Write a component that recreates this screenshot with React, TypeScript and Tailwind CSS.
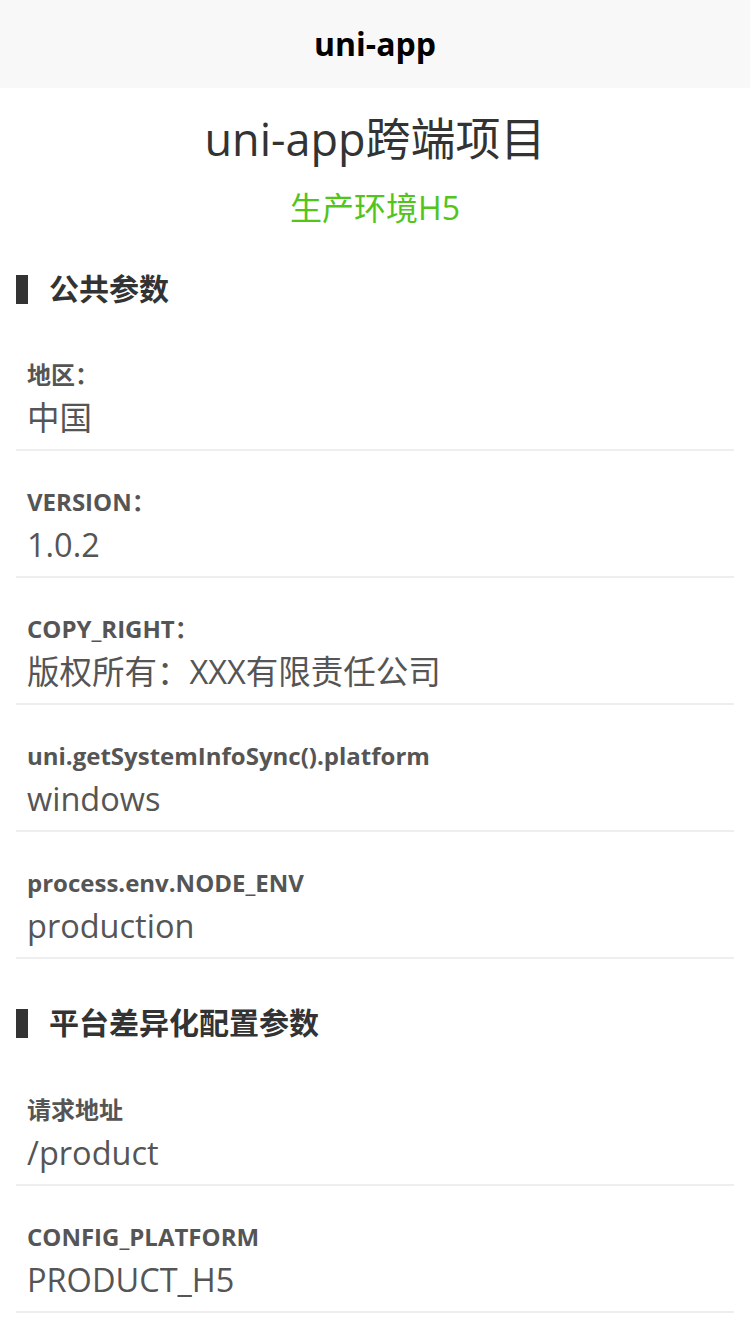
import React from "react";

type Item = { label: string; value: string };

const common: Item[] = [
  { label: "地区：", value: "中国" },
  { label: "VERSION：", value: "1.0.2" },
  { label: "COPY_RIGHT：", value: "版权所有：XXX有限责任公司" },
  { label: "uni.getSystemInfoSync().platform", value: "windows" },
  { label: "process.env.NODE_ENV", value: "production" },
];

const platform: Item[] = [
  { label: "请求地址", value: "/product" },
  { label: "CONFIG_PLATFORM", value: "PRODUCT_H5" },
];

function SectionTitle({ title, first }: { title: string; first?: boolean }) {
  return (
    <div
      className={
        first
          ? "flex items-center h-[36px] pt-[45px] pb-[17px] box-content"
          : "flex items-center h-[36px] pt-[46px] pb-[18px] box-content"
      }
    >
      <div className="w-[12px] h-[29px] bg-[#333]" />
      <span className="ml-[21px] text-[30px] leading-[36px] font-bold text-[#333]">{title}</span>
    </div>
  );
}

function Row({ item }: { item: Item }) {
  return (
    <div className="pt-[35px] pb-[9px] px-[11px] border-b-2 border-[#eeeeee]">
      <div className="text-[24px] leading-[32px] font-bold text-[#555]">{item.label}</div>
      <div className="mt-[5px] text-[32.5px] leading-[44px] text-[#555]">{item.value}</div>
    </div>
  );
}

export default function App() {
  return (
    <div
      className="min-h-screen bg-white"
      style={{ fontFamily: '"Open Sans", "Noto Sans CJK SC", sans-serif' }}
    >
      {/* nav bar */}
      <div className="h-[88px] bg-[#f8f8f8] flex items-center justify-center">
        <span className="text-[32px] font-bold text-black">uni-app</span>
      </div>

      <div className="pt-[21px] text-center">
        <div className="text-[45px] leading-[60px] text-[#333]">uni-app跨端项目</div>
        <div className="mt-[21px] text-[32px] leading-[36px] text-[#52c41a]">生产环境H5</div>
      </div>

      <div className="px-[16px]">
        <SectionTitle title="公共参数" first />
        {common.map((it) => (
          <Row key={it.label} item={it} />
        ))}
        <SectionTitle title="平台差异化配置参数" />
        {platform.map((it) => (
          <Row key={it.label} item={it} />
        ))}
      </div>
    </div>
  );
}
